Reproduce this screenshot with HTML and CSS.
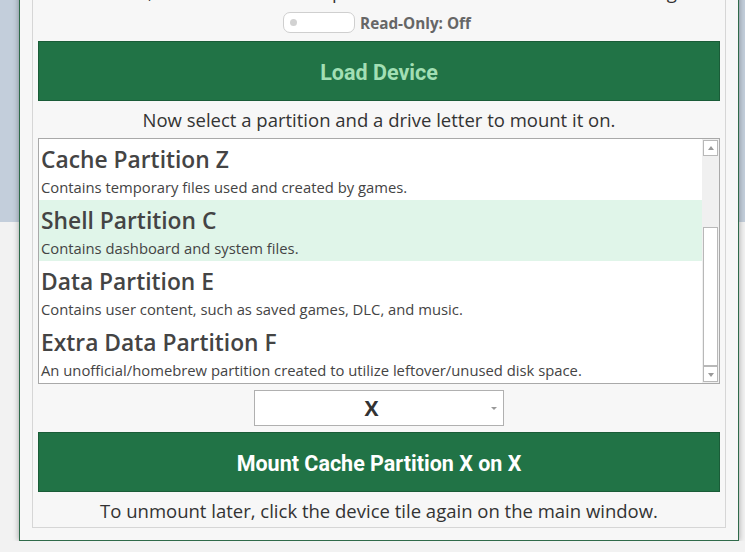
FILE: index.html
```html
<!DOCTYPE html>
<html lang="en">
<head>
  <meta charset="UTF-8">
  <meta name="viewport" content="width=device-width, initial-scale=1.0">
  <title>Mount Device</title>
  <link rel="stylesheet" href="styles.css">
</head>
<body>
<div class="dialog">
  <div class="panel">
    <p class="intro">Inserted, the attached drive's partition table will be read while loading.</p>

    <!-- Read-only switch -->
    <div class="toggle-row">
      <span class="toggle"><span class="toggle-knob"></span></span>
      <span class="toggle-label">Read-Only: Off</span>
    </div>

    <button class="action-btn load-btn">Load Device</button>

    <p class="hint">Now select a partition and a drive letter to mount it on.</p>

    <!-- Partition list -->
    <div class="partition-list">
      <div class="partition-items">
        <div class="partition">
          <div class="partition-name">Cache Partition Z</div>
          <div class="partition-desc">Contains temporary files used and created by games.</div>
        </div>
        <div class="partition selected">
          <div class="partition-name">Shell Partition C</div>
          <div class="partition-desc">Contains dashboard and system files.</div>
        </div>
        <div class="partition">
          <div class="partition-name">Data Partition E</div>
          <div class="partition-desc">Contains user content, such as saved games, DLC, and music.</div>
        </div>
        <div class="partition">
          <div class="partition-name">Extra Data Partition F</div>
          <div class="partition-desc">An unofficial/homebrew partition created to utilize leftover/unused disk space.</div>
        </div>
      </div>
      <div class="scrollbar">
        <span class="scroll-btn up"></span>
        <span class="scroll-track"><span class="scroll-thumb"></span></span>
        <span class="scroll-btn down"></span>
      </div>
    </div>

    <!-- Drive letter picker -->
    <div class="drive-select">
      <span class="drive-value">X</span>
      <span class="drive-caret"></span>
    </div>

    <button class="action-btn mount-btn">Mount Cache Partition X on X</button>

    <p class="hint footer-hint">To unmount later, click the device tile again on the main window.</p>
  </div>
</div>
</body>
</html>
```

FILE: styles.css
```css
html {
  background-color: #f2f2f2;
  background-image: linear-gradient(#c3cedb, #c3cedb);
  background-size: 100% 222px;
  background-repeat: no-repeat;
}

body {
  margin: 0;
  font-family: "Open Sans", "Noto Sans", sans-serif;
  color: #333;
}

.dialog {
  width: 720px;
  box-sizing: border-box;
  margin: -39px 0 0 19px;
  padding: 12px;
  background-color: #f7f7f7;
  border: 1px solid #2f6a4a;
  box-shadow: 0 0 6px rgba(0, 0, 0, 0.35);
}

.panel {
  display: flex;
  flex-direction: column;
  padding: 5px 5px 4px;
  border: 1px solid #d6d6d6;
  background-color: #f7f7f7;
}

.intro,
.hint {
  margin: 0;
  font-size: 18.5px;
  line-height: 24px;
  text-align: center;
  white-space: nowrap;
}

.hint {
  margin: 7px 0 6px;
}

.footer-hint {
  margin-bottom: 0;
}

/* Toggle switch */
.toggle-row {
  display: flex;
  justify-content: center;
  align-items: center;
  gap: 5px;
  height: 21px;
  margin-top: 8px;
  margin-left: -4px;
}

.toggle {
  display: flex;
  align-items: center;
  width: 72px;
  height: 21px;
  box-sizing: border-box;
  padding-left: 6px;
  background-color: #fff;
  border: 1px solid #cfcfcf;
  border-radius: 7px;
}

.toggle-knob {
  width: 7px;
  height: 7px;
  border-radius: 50%;
  background-color: #d2d2d2;
}

.toggle-label {
  font-size: 15.3px;
  font-weight: 700;
  color: #666;
}

/* Big green buttons */
.action-btn {
  height: 60px;
  margin-top: 8px;
  padding: 2px 0 0;
  font-family: Roboto, sans-serif;
  font-size: 21.5px;
  font-weight: 700;
  background-color: #217346;
  border: 1px solid #1a5c38;
  cursor: pointer;
}

.load-btn {
  color: #a2dfb4;
}

.mount-btn {
  margin-top: 6px;
  color: #fff;
}

/* Partition list */
.partition-list {
  display: flex;
  height: 246px;
  box-sizing: border-box;
  background-color: #fff;
  border: 1px solid #a9a9a9;
}

.partition-items {
  flex: 1;
  overflow: hidden;
}

.partition {
  height: 61px;
  box-sizing: border-box;
  padding: 6px 0 3px 2px;
  color: #444;
}

.partition.selected {
  background-color: #e0f5e9;
}

.partition-name {
  font-size: 22.8px;
  font-weight: 600;
  line-height: 30px;
}

.partition-desc {
  margin-top: 2px;
  font-size: 14.8px;
  line-height: 20px;
  white-space: nowrap;
}

.scrollbar {
  display: flex;
  flex-direction: column;
  width: 17px;
  box-sizing: border-box;
  padding: 1px;
  background-color: #f0f0f0;
}

.scroll-btn {
  position: relative;
  height: 16px;
  box-sizing: border-box;
  background-color: #fff;
  border: 1px solid #b8b8b8;
}

.scroll-btn::after {
  content: "";
  position: absolute;
  left: 4px;
  top: 5px;
  border-left: 3px solid transparent;
  border-right: 3px solid transparent;
}

.scroll-btn.up::after {
  border-bottom: 4px solid #9a9a9a;
}

.scroll-btn.down::after {
  top: 6px;
  border-top: 4px solid #9a9a9a;
}

.scroll-track {
  flex: 1;
  display: flex;
  flex-direction: column;
  justify-content: flex-end;
}

.scroll-thumb {
  height: 139px;
  box-sizing: border-box;
  background-color: #fff;
  border: 1px solid #b8b8b8;
}

/* Drive letter dropdown */
.drive-select {
  position: relative;
  align-self: center;
  display: flex;
  align-items: center;
  justify-content: center;
  width: 250px;
  height: 36px;
  box-sizing: border-box;
  margin-top: 6px;
  padding-right: 15px;
  background-color: #fff;
  border: 1px solid #b0b0b0;
  font-size: 21px;
  font-weight: 700;
  color: #333;
}

.drive-caret {
  position: absolute;
  right: 6px;
  top: 16px;
  border-left: 3px solid transparent;
  border-right: 3px solid transparent;
  border-top: 3px solid #999;
}
```
